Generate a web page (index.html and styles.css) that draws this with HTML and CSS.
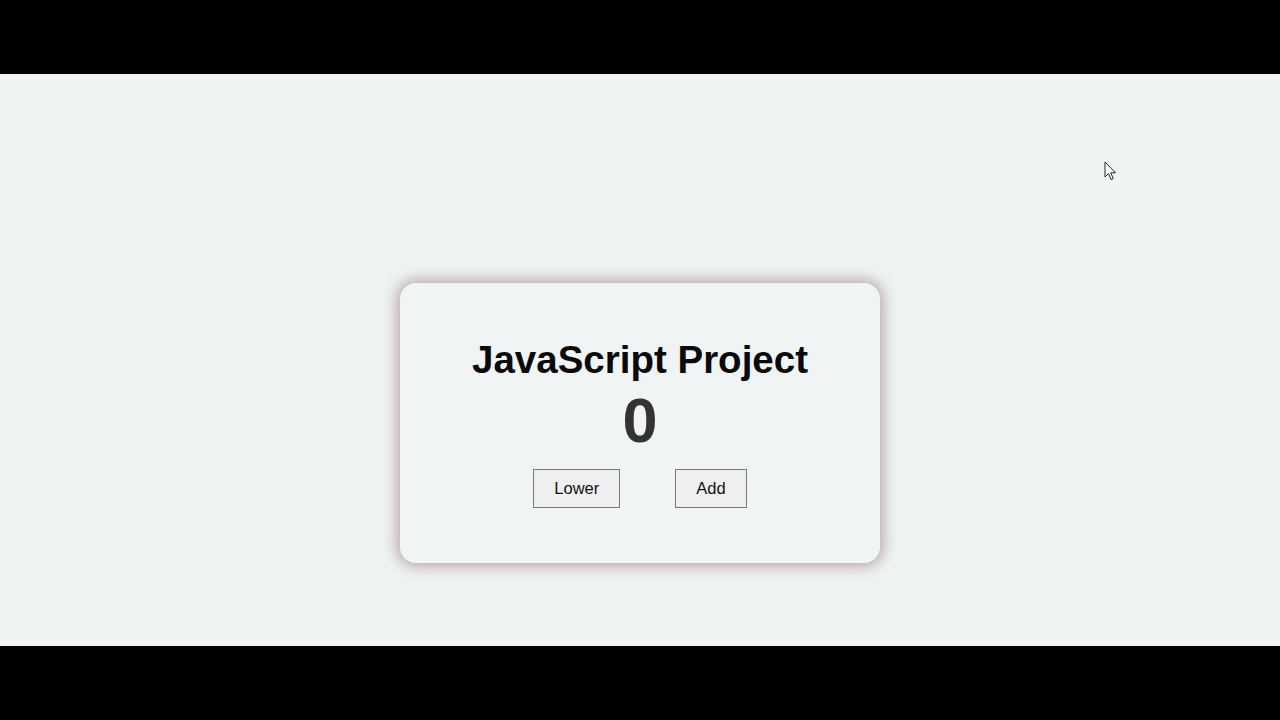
FILE: index.html
```html
<!DOCTYPE html>
<html lang="en">
<head>
<meta charset="utf-8">
<title>JavaScript Project</title>
<link rel="stylesheet" href="styles.css">
</head>
<body>
<div class="bar"></div>
<main class="stage">
  <section class="card">
    <h1 class="title">JavaScript Project</h1>
    <div class="count">0</div>
    <div class="actions">
      <button class="btn">Lower</button>
      <button class="btn">Add</button>
    </div>
  </section>
  <svg class="cursor" width="13" height="20" viewBox="0 0 13 20">
    <path d="M1 1 L1 16 L4.5 12.5 L7 18.5 L9.2 17.6 L6.8 11.8 L11.5 11.8 Z" fill="#fff" stroke="#222" stroke-width="1" stroke-linejoin="round"/>
  </svg>
</main>
<div class="bar"></div>
</body>
</html>
```
FILE: styles.css
```css
html, body {
  margin: 0;
  padding: 0;
  background: #000;
  font-family: "Liberation Sans", Arial, sans-serif;
}
.bar {
  height: 74px;
  background: #000;
}
.stage {
  position: relative;
  height: 572px;
  box-sizing: border-box;
  padding-top: 209px;
  background: #f0f3f4;
  display: flex;
  justify-content: center;
  align-items: flex-start;
}
.card {
  width: 480px;
  height: 280px;
  box-sizing: border-box;
  padding-top: 55px;
  background: #f1f4f5;
  border-radius: 16px;
  box-shadow: 0 0 14px 4px rgba(145, 115, 115, 0.55);
  display: flex;
  flex-direction: column;
  align-items: center;
}
.title {
  margin: 0;
  font-size: 38.5px;
  line-height: 44px;
  font-weight: bold;
  color: #0a0a0a;
}
.count {
  margin-top: 6px;
  font-size: 63px;
  line-height: 64px;
  font-weight: bold;
  color: #333;
}
.actions {
  margin-top: 17px;
  display: flex;
  gap: 55px;
}
.btn {
  height: 39px;
  padding: 0 20px;
  font-family: "Liberation Sans", Arial, sans-serif;
  font-size: 16.5px;
  color: #111;
  background: #efefef;
  border: 1px solid #7a7a7a;
  border-radius: 0;
}
.cursor {
  position: absolute;
  left: 1104px;
  top: 87px;
}
```
